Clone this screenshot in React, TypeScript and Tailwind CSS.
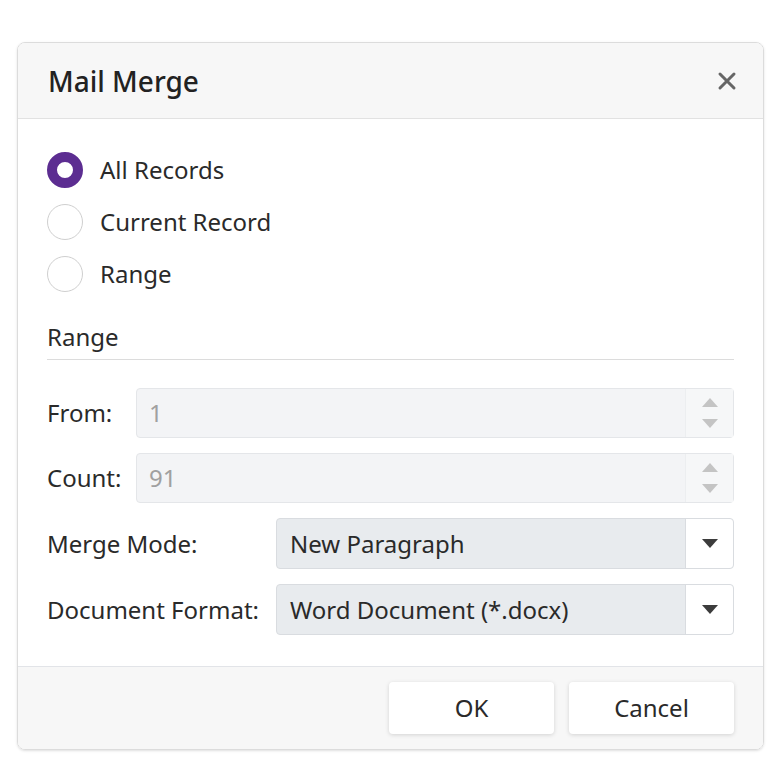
import React from 'react';

const font = { fontFamily: '"Noto Sans", "Open Sans", sans-serif' };

function Radio({ label, checked }: { label: string; checked?: boolean }) {
  return (
    <label className="flex items-center gap-[17px] h-[52px]">
      {checked ? (
        <span className="w-9 h-9 rounded-full border-[10px] border-[#5c2d91] bg-white" />
      ) : (
        <span className="w-9 h-9 rounded-full border border-[#cfcfcf] bg-white" />
      )}
      <span className="text-[24px] text-[#2a2a2a]">{label}</span>
    </label>
  );
}

function SpinInput({ label, value }: { label: string; value: string }) {
  return (
    <div className="flex items-center h-[50px]">
      <span className="w-[89px] text-[24px] text-[#2a2a2a]">{label}</span>
      <div className="flex-1 flex h-full rounded border border-[#e4e6e9] bg-[#f3f4f6]">
        <span className="flex-1 flex items-center px-3 text-[24px] text-[#a0a0a0]">{value}</span>
        <div className="w-12 flex flex-col items-center justify-center gap-[12px] border-l border-[#eceef0] bg-[#f6f7f8]">
          <svg width="16" height="9" viewBox="0 0 16 9"><path d="M8 0L16 9H0z" fill="#c4c4c4" /></svg>
          <svg width="16" height="9" viewBox="0 0 16 9"><path d="M0 0h16L8 9z" fill="#c4c4c4" /></svg>
        </div>
      </div>
    </div>
  );
}

function Select({ label, value }: { label: string; value: string }) {
  return (
    <div className="flex items-center h-[51px]">
      <span className="w-[229px] text-[24px] text-[#2a2a2a]">{label}</span>
      <div className="flex-1 flex h-full rounded border border-[#d9dce0] bg-[#e8ebee]">
        <span className="flex-1 flex items-center px-[13px] text-[24px] text-[#2a2a2a]">{value}</span>
        <div className="w-12 flex items-center justify-center border-l border-[#d9dce0] bg-white rounded-r">
          <svg width="16" height="9" viewBox="0 0 16 9"><path d="M0 0h16L8 9z" fill="#3c3c3c" /></svg>
        </div>
      </div>
    </div>
  );
}

export default function App() {
  return (
    <div className="w-[780px] h-[780px] bg-white pt-[42px] pl-[17px]" style={font}>
      <div className="w-[747px] h-[708px] flex flex-col rounded-lg border border-[#dcdcdc] shadow-sm overflow-hidden">
        <div className="h-[76px] flex items-center justify-between pl-[30px] pr-[26px] bg-[#f7f7f7] border-b border-[#e2e2e2]">
          <h1 className="text-[28px] font-medium text-[#222]">Mail Merge</h1>
          <svg width="20" height="20" viewBox="0 0 20 20">
            <path d="M3 3L17 17M17 3L3 17" stroke="#666" strokeWidth="3" strokeLinecap="round" />
          </svg>
        </div>

        <div className="flex-1 flex flex-col px-[29px] pt-[25px] bg-white">
          <Radio label="All Records" checked />
          <Radio label="Current Record" />
          <Radio label="Range" />

          <div className="mt-[19px] pb-[4px] border-b border-[#dcdcdc] text-[24px] text-[#2a2a2a]">Range</div>

          <div className="mt-[28px] flex flex-col gap-[15px]">
            <SpinInput label="From:" value="1" />
            <SpinInput label="Count:" value="91" />
            <Select label="Merge Mode:" value="New Paragraph" />
            <Select label="Document Format:" value="Word Document (*.docx)" />
          </div>
        </div>

        <div className="h-[83px] flex items-center justify-end gap-[15px] pr-[29px] bg-[#f7f7f7] border-t border-[#e2e4e8]">
          <button className="w-[165px] h-[52px] rounded bg-white shadow-[0_1px_4px_rgba(0,0,0,0.15)] text-[24px] text-[#2a2a2a]">OK</button>
          <button className="w-[165px] h-[52px] rounded bg-white shadow-[0_1px_4px_rgba(0,0,0,0.15)] text-[24px] text-[#2a2a2a]">Cancel</button>
        </div>
      </div>
    </div>
  );
}
